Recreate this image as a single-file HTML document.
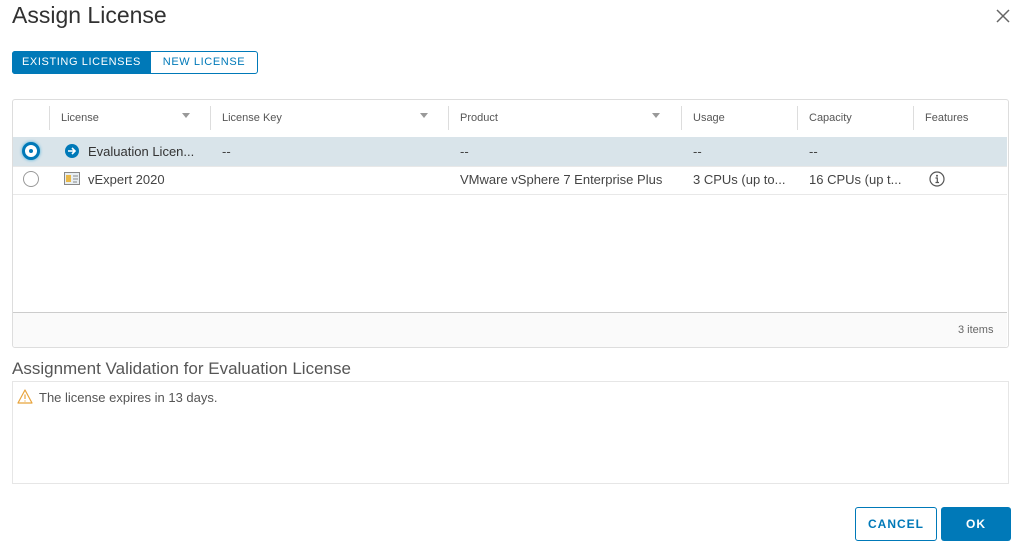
<!DOCTYPE html><html><head><style>
body{margin:0;width:1024px;height:544px;background:#fff;font-family:"Liberation Sans",sans-serif;position:relative;overflow:hidden;color:#333}
.a{position:absolute}
.h{font-size:11px;color:#565656;top:112px}
.c{font-size:13px;color:#444}
.sep{position:absolute;top:106px;width:1px;height:24px;background:#ddd}
.f{position:absolute;top:113px;width:0;height:0;border-left:4px solid transparent;border-right:4px solid transparent;border-top:5px solid #999}
</style></head><body>
<div class="a" style="left:12px;top:2px;font-size:23px;color:#313131">Assign License</div>
<svg class="a" style="left:996px;top:9px" width="14" height="14"><path d="M1 1L13 13M13 1L1 13" stroke="#666" stroke-width="1.5"/></svg>
<div class="a" style="left:12px;top:51px;width:244px;height:21px;border:1px solid #0079b8;border-radius:3px"></div>
<div class="a" style="left:12px;top:51px;width:139px;height:23px;background:#0079b8;border-radius:3px 0 0 3px;color:#fff;font-size:11px;letter-spacing:.6px;line-height:23px;text-align:center">EXISTING LICENSES</div>
<div class="a" style="left:151px;top:51px;width:106px;height:23px;color:#0079b8;font-size:11px;letter-spacing:.6px;line-height:23px;text-align:center">NEW LICENSE</div>

<div class="a" style="left:12px;top:99px;width:995px;height:247px;border:1px solid #ddd;border-radius:3px"></div>
<div class="sep" style="left:49px"></div><div class="sep" style="left:210px"></div><div class="sep" style="left:448px"></div><div class="sep" style="left:681px"></div><div class="sep" style="left:797px"></div><div class="sep" style="left:913px"></div>
<div class="a h" style="left:61px">License</div><div class="f" style="left:182px"></div>
<div class="a h" style="left:222px">License Key</div><div class="f" style="left:420px"></div>
<div class="a h" style="left:460px">Product</div><div class="f" style="left:652px"></div>
<div class="a h" style="left:693px">Usage</div>
<div class="a h" style="left:809px">Capacity</div>
<div class="a h" style="left:925px">Features</div>
<div class="a" style="left:13px;top:137px;width:994px;height:29px;background:#d9e4ea"></div>
<div class="a" style="left:13px;top:166px;width:994px;height:1px;background:#e8e8e8"></div>
<div class="a" style="left:13px;top:194px;width:994px;height:1px;background:#e8e8e8"></div>
<div class="a" style="left:22px;top:142px;width:12px;height:12px;border-radius:50%;background:#fff;border:3px solid #0079b8;box-shadow:0 0 3px #49afd9"></div>
<div class="a" style="left:29px;top:149px;width:4px;height:4px;border-radius:50%;background:#0079b8"></div>
<div class="a" style="left:23px;top:171px;width:14px;height:14px;border-radius:50%;border:1px solid #999;background:#fff"></div>
<svg class="a" style="left:65px;top:144px" width="14" height="14"><circle cx="7" cy="7" r="7" fill="#0079b8"/><path d="M3 7H10M7 4L10 7L7 10" stroke="#fff" stroke-width="1.6" fill="none"/></svg>
<svg class="a" style="left:64px;top:172px" width="16" height="13"><rect x=".5" y=".5" width="15" height="12" fill="#e8eef2" stroke="#888"/><rect x="2" y="3" width="5" height="7" fill="#e8b84a"/><path d="M9 4H14M9 7H14M9 10H13" stroke="#888"/></svg>
<div class="a c" style="left:88px;top:144px;color:#333">Evaluation Licen...</div>
<div class="a c" style="left:222px;top:144px">--</div><div class="a c" style="left:460px;top:144px">--</div><div class="a c" style="left:693px;top:144px">--</div><div class="a c" style="left:809px;top:144px">--</div>
<div class="a c" style="left:88px;top:172px">vExpert 2020</div>
<div class="a c" style="left:460px;top:172px">VMware vSphere 7 Enterprise Plus</div>
<div class="a c" style="left:693px;top:172px">3 CPUs (up to...</div>
<div class="a c" style="left:809px;top:172px">16 CPUs (up t...</div>
<svg class="a" style="left:929px;top:171px" width="16" height="16"><circle cx="8" cy="8" r="7" fill="none" stroke="#555" stroke-width="1.2"/><circle cx="8" cy="4.7" r="1" fill="#555"/><path d="M6.5 7H8.3V11.5M6.5 11.5H10" stroke="#555" stroke-width="1.2" fill="none"/></svg>
<div class="a" style="left:13px;top:312px;width:994px;height:34px;background:#fafafa;border-top:1px solid #ccc;border-radius:0 0 3px 3px"></div>
<div class="a" style="left:958px;top:324px;font-size:11px;color:#666">3 items</div>

<div class="a" style="left:12px;top:359px;font-size:17px;color:#565656">Assignment Validation for Evaluation License</div>
<div class="a" style="left:12px;top:381px;width:995px;height:101px;border:1px solid #e6e6e6"></div>
<svg class="a" style="left:17px;top:389px" width="16" height="15"><path d="M8 1L15 14H1Z" fill="none" stroke="#e8a33b" stroke-width="1.2" stroke-linejoin="round"/><path d="M8 5.5V10M8 11.5V12.5" stroke="#e8a33b" stroke-width="1.2"/></svg>
<div class="a" style="left:39px;top:390px;font-size:13px;color:#555">The license expires in 13 days.</div>

<div class="a" style="left:855px;top:507px;width:80px;height:32px;border:1px solid #0079b8;border-radius:3px;color:#0079b8;font-size:12px;font-weight:bold;letter-spacing:1px;line-height:32px;text-align:center">CANCEL</div>
<div class="a" style="left:941px;top:507px;width:70px;height:34px;background:#0079b8;border-radius:3px;color:#fff;font-size:12px;font-weight:bold;letter-spacing:1px;line-height:34px;text-align:center">OK</div>
</body></html>
